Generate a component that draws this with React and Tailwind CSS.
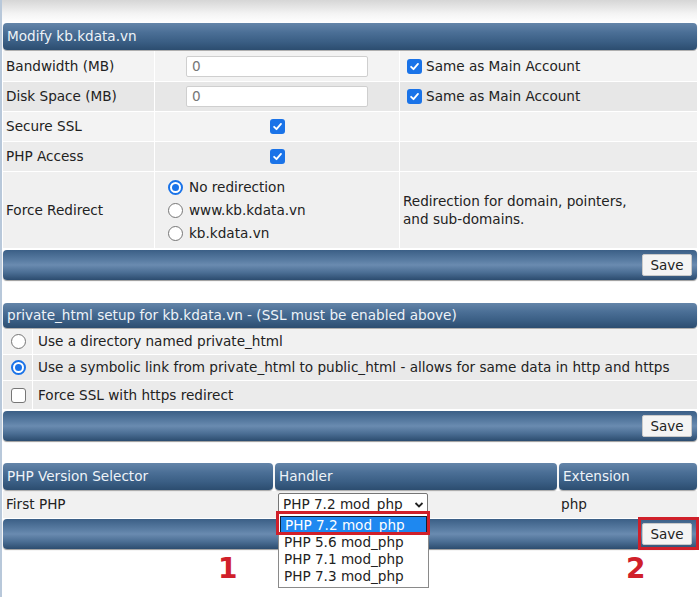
import React from "react";

const hdr = "bg-[linear-gradient(to_bottom,#6485a9_0%,#4b6f96_35%,#3a5e84_70%,#2c4d70_100%)] rounded-[4px] text-[#eef3f8] text-[13.6px] flex items-center px-[4px] shadow-[0_1px_1px_rgba(0,0,0,0.35)]";
const ftr = "bg-[linear-gradient(to_bottom,#3b5f86_0%,#5a7da3_35%,#6a8bb0_50%,#4b6e94_75%,#2c4c6f_100%)] rounded-[4px] shadow-[0_1px_1px_rgba(0,0,0,0.4)] flex items-center justify-end pr-[5px]";

function SaveBtn() {
  return (
    <div className="w-[50px] h-[22px] bg-[#f4f4f4] border border-[#c9c9c9] rounded-[2px] flex items-center justify-center text-[13.5px] text-[#222]">
      Save
    </div>
  );
}

function Check({ checked = true }) {
  return checked ? (
    <span className="inline-flex w-[15px] h-[15px] rounded-[3px] bg-[#1a73e8] items-center justify-center shrink-0">
      <svg width="11" height="11" viewBox="0 0 12 12">
        <path d="M2.3 6.3 L4.9 8.9 L9.8 3.2" fill="none" stroke="white" strokeWidth="2" strokeLinecap="round" strokeLinejoin="round" />
      </svg>
    </span>
  ) : (
    <span className="inline-block w-[15px] h-[15px] rounded-[3px] bg-white border border-[#767676] shrink-0" />
  );
}

function Radio({ checked }) {
  return checked ? (
    <span className="inline-flex w-[15px] h-[15px] rounded-full border-[2px] border-[#1a73e8] bg-white items-center justify-center shrink-0">
      <span className="w-[7px] h-[7px] rounded-full bg-[#1a73e8]" />
    </span>
  ) : (
    <span className="inline-block w-[15px] h-[15px] rounded-full bg-white border border-[#767676] shrink-0" />
  );
}

export default function App() {
  return (
    <div
      className="w-[700px] h-[597px] bg-white relative overflow-hidden border-l-2 border-[#b8c8da] text-[13.6px] text-[#222]"
      style={{ fontFamily: "Verdana, 'DejaVu Sans', sans-serif" }}
    >
      <div className="mr-[3px]">
        <div className="h-[23px] bg-[linear-gradient(to_bottom,#d6d6d6_0%,#f4f4f4_60%,#ffffff_100%)]" />

        {/* Section 1 */}
        <div className="ml-px">
          <div className={hdr + " h-[27px]"}>Modify kb.kdata.vn</div>
          <div className="flex flex-col gap-px mt-px">
            <div className="flex h-[30px] bg-[#f3f3f3]">
              <div className="w-[152px] border-r border-white flex items-center pl-[3px]">Bandwidth (MB)</div>
              <div className="w-[245px] border-r border-white flex items-center pl-[31px]">
                <div className="w-[182px] h-[21px] bg-white border border-[#cfcfcf] rounded-[2px] flex items-center pl-[5px] text-[#777]">0</div>
              </div>
              <div className="flex-1 flex items-center pl-[7px] gap-[4px]"><Check />Same as Main Account</div>
            </div>
            <div className="flex h-[29px] bg-[#e7e7e7]">
              <div className="w-[152px] border-r border-white flex items-center pl-[3px]">Disk Space (MB)</div>
              <div className="w-[245px] border-r border-white flex items-center pl-[31px]">
                <div className="w-[182px] h-[21px] bg-white border border-[#cfcfcf] rounded-[2px] flex items-center pl-[5px] text-[#777]">0</div>
              </div>
              <div className="flex-1 flex items-center pl-[7px] gap-[4px]"><Check />Same as Main Account</div>
            </div>
            <div className="flex h-[29px] bg-[#f3f3f3]">
              <div className="w-[152px] border-r border-white flex items-center pl-[3px]">Secure SSL</div>
              <div className="w-[245px] border-r border-white flex items-center justify-center"><Check /></div>
              <div className="flex-1" />
            </div>
            <div className="flex h-[29px] bg-[#ececec]">
              <div className="w-[152px] border-r border-white flex items-center pl-[3px]">PHP Access</div>
              <div className="w-[245px] border-r border-white flex items-center justify-center"><Check /></div>
              <div className="flex-1" />
            </div>
            <div className="flex h-[76px] bg-[#f0f0f0]">
              <div className="w-[152px] border-r border-white flex items-center pl-[3px]">Force Redirect</div>
              <div className="w-[245px] border-r border-white flex flex-col justify-center pl-[13px] gap-[7px]">
                <div className="flex items-center gap-[6px] h-[16px]"><Radio checked />No redirection</div>
                <div className="flex items-center gap-[6px] h-[16px]"><Radio />www.kb.kdata.vn</div>
                <div className="flex items-center gap-[6px] h-[16px]"><Radio />kb.kdata.vn</div>
              </div>
              <div className="flex-1 flex items-center pl-[3px] leading-[18px]">
                <div>Redirection for domain, pointers,<br />and sub-domains.</div>
              </div>
            </div>
          </div>
          <div className={ftr + " h-[30px] mt-[2px]"}><SaveBtn /></div>
        </div>

        {/* Section 2 */}
        <div className="ml-px mt-[23px]">
          <div className={hdr + " h-[25px]"}>private_html setup for kb.kdata.vn - (SSL must be enabled above)</div>
          <div className="flex flex-col gap-px mt-px">
            <div className="flex h-[25px] bg-[#f1f1f1]">
              <div className="w-[30px] border-r border-white flex items-center pl-[8px]"><Radio /></div>
              <div className="flex-1 flex items-center pl-[5px]">Use a directory named private_html</div>
            </div>
            <div className="flex h-[25px] bg-[#e9e9e9]">
              <div className="w-[30px] border-r border-white flex items-center pl-[8px]"><Radio checked /></div>
              <div className="flex-1 flex items-center pl-[5px] whitespace-nowrap">Use a symbolic link from private_html to public_html - allows for same data in http and https</div>
            </div>
            <div className="flex h-[28px] bg-[#ebebeb]">
              <div className="w-[30px] border-r border-white flex items-center pl-[8px]"><Check checked={false} /></div>
              <div className="flex-1 flex items-center pl-[5px]">Force SSL with https redirect</div>
            </div>
          </div>
          <div className={ftr + " h-[30px] mt-[2px]"}><SaveBtn /></div>
        </div>

        {/* Section 3 */}
        <div className="ml-px mt-[22px] pb-[60px]">
          <div className="flex gap-[2px] h-[27px]">
            <div className={hdr + " w-[270px]"}>PHP Version Selector</div>
            <div className={hdr + " w-[282px]"}>Handler</div>
            <div className={hdr + " flex-1"}>Extension</div>
          </div>
          <div className="flex h-[27px] bg-[#f1f1f1] mt-px">
            <div className="w-[272px] flex items-center pl-[3px]">First PHP</div>
            <div className="w-[284px] flex items-center pl-[3px]">
              <div className="w-[150px] h-[23px] bg-white border border-[#767676] rounded-[2px] flex items-center justify-between pl-[4px] pr-[3px]">
                <span>PHP 7.2 mod_php</span>
                <svg width="10" height="8" viewBox="0 0 10 8">
                  <path d="M1.5 2 L5 5.5 L8.5 2" fill="none" stroke="#222" strokeWidth="1.8" />
                </svg>
              </div>
            </div>
            <div className="flex-1 flex items-center pl-[2px]">php</div>
          </div>
          <div className={ftr + " h-[30px] mt-px"}><SaveBtn /></div>
        </div>
      </div>

      {/* Open dropdown list */}
      <div className="absolute left-[276px] top-[513px] w-[151px] bg-white border border-[#8a8a8a] pt-[2px] pb-[3px] leading-[17px]">
        <div className="mx-px bg-[#1e88f0] text-white pl-[4px] h-[17px] border border-[#123]">PHP 7.2 mod_php</div>
        <div className="pl-[5px] h-[16px] mt-[1px]">PHP 5.6 mod_php</div>
        <div className="pl-[5px] h-[16px] mt-[1px]">PHP 7.1 mod_php</div>
        <div className="pl-[5px] h-[16px] mt-[1px]">PHP 7.3 mod_php</div>
      </div>
      {/* Red highlight boxes */}
      <div className="absolute left-[274px] top-[511px] w-[154px] h-[24px] border-[3px] border-[#d0202a]" />
      <div className="absolute left-[636px] top-[517px] w-[61px] h-[33px] border-[3px] border-[#d0202a]" />
      {/* Step numbers */}
      <div className="absolute left-[216px] top-[555px] text-[28px] font-bold text-[#d0202a] leading-none">1</div>
      <div className="absolute left-[624px] top-[555px] text-[28px] font-bold text-[#d0202a] leading-none">2</div>
    </div>
  );
}
